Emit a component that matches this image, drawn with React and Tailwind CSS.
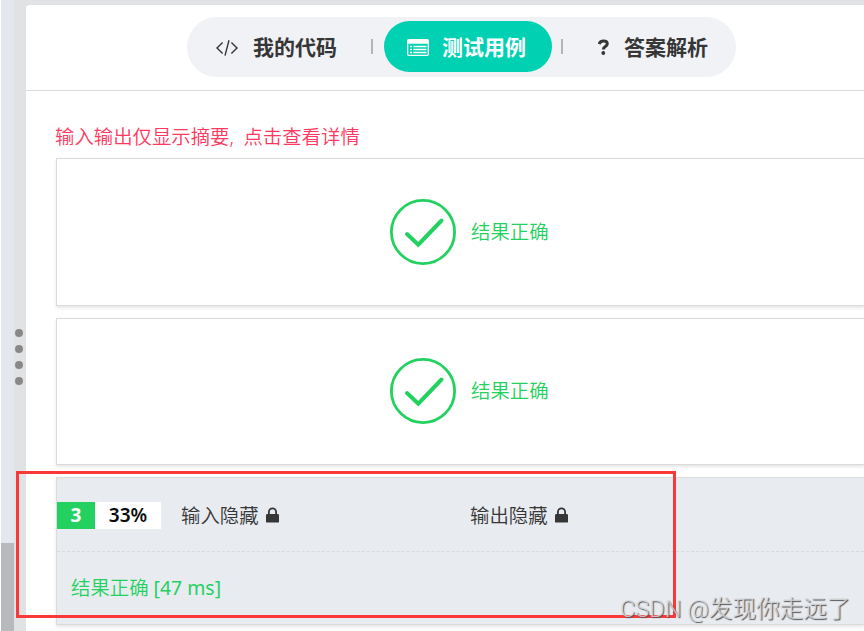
import clsx from 'clsx';

const DOTS = [0, 1, 2, 3];

function CodeIcon() {
  return (
    <svg width="22" height="17" viewBox="0 0 22 17" fill="none" stroke="#363636" strokeWidth="1.4">
      <path d="M6.6 3.6 1 9l5.6 5.4M15.4 3.6 21 9l-5.6 5.4M13 1.2 9 16.6" />
    </svg>
  );
}

function ListIcon() {
  return (
    <svg width="22" height="17" viewBox="0 0 22 17" fill="none" stroke="#fff">
      <rect x=".65" y=".65" width="20.7" height="15.7" rx="1" strokeWidth="1.3" />
      <path d="M1 2.7h20" strokeWidth="4" />
      <path d="M3 7.5h2M3 10.5h2M3 13.5h2M6.3 7.5H19.5M6.3 10.5H19.5M6.3 13.5H19.5" strokeWidth="1.4" />
    </svg>
  );
}

function QuestionIcon() {
  return (
    <svg width="11" height="16" viewBox="0 0 11 16" fill="none">
      <path d="M1.2 5C1.8 3 3.2 2 5.4 2c2.4 0 3.9 1.1 3.9 2.8 0 2.8-4 2.7-4 5.6" stroke="#363636" strokeWidth="3" />
      <circle cx="5.3" cy="14" r="1.9" fill="#363636" />
    </svg>
  );
}

function LockIcon() {
  return (
    <svg className="mb-[2px]" width="13" height="16" viewBox="0 0 13 16" fill="none">
      <path d="M2.9 8V4.9a3.6 3.6 0 0 1 7.2 0V8" stroke="#363636" strokeWidth="1.8" />
      <rect x="0" y="7" width="13" height="8.6" rx="1.2" fill="#363636" />
    </svg>
  );
}

function CheckCircle() {
  return (
    <svg width="66" height="66" viewBox="0 0 66 66" fill="none" stroke="#23d160">
      <circle cx="33" cy="33" r="31.6" strokeWidth="2.8" />
      <path d="M17 35 28.3 45.6 51.5 21.5" strokeWidth="4" strokeLinecap="round" />
    </svg>
  );
}

function Tab({ icon, label, active, className }) {
  return (
    <div
      className={clsx(
        'flex h-[51px] items-center pt-px text-[21px] font-bold whitespace-nowrap',
        active ? 'rounded-full bg-[#00d1b2] font-black text-white' : 'text-[#363636]',
        className
      )}
    >
      {icon}
      <span>{label}</span>
    </div>
  );
}

function ResultCard({ className }) {
  return (
    <div
      className={clsx(
        'flex shrink-0 items-center gap-[15px] border border-r-0 border-[#dbdbdb] bg-white pl-[333px] shadow-[0_2px_3px_rgba(10,10,10,0.1)]',
        className
      )}
    >
      <CheckCircle />
      <span className="text-[#23d160]">结果正确</span>
    </div>
  );
}

export default function App() {
  return (
    <div className="relative flex h-[631px] w-[864px] overflow-hidden bg-[#e1e2e6] font-['Noto_Sans','Noto_Sans_CJK_SC',sans-serif] text-[19.4px] leading-7">
      <div className="flex w-[14px] shrink-0 flex-col justify-end border-l border-white bg-[#e4e7ed]">
        <div className="h-[88px] bg-[#b8b9bd]" />
      </div>
      <div className="flex w-3 shrink-0 flex-col items-center gap-2 bg-[#e1e2e4] pt-[329px]">
        {DOTS.map((dot) => (
          <div key={dot} className="ml-[-2px] h-2 w-2 shrink-0 rounded-full bg-[#888]" />
        ))}
      </div>

      <div className="mt-[5px] flex min-w-0 flex-1 flex-col overflow-hidden rounded-tl-[4px] bg-white">
        <div className="h-[86px] shrink-0 border-b border-[#dbdbdb] pt-3 pl-[161px]">
          <div className="flex h-[60px] w-[549px] items-center rounded-full bg-[#f1f2f6] pb-px">
            <Tab className="w-[184px] gap-[15px] pl-[29px]" icon={<CodeIcon />} label="我的代码" />
            <div className="mr-[11px] h-[15px] w-[2px] bg-[#b5b5b5]" />
            <Tab active className="w-[168px] gap-[13px] pl-[23px]" icon={<ListIcon />} label="测试用例" />
            <div className="ml-[9px] h-[15px] w-[2px] bg-[#b5b5b5]" />
            <Tab className="gap-[15px] pl-[35px]" icon={<QuestionIcon />} label="答案解析" />
          </div>
        </div>

        <div className="flex flex-col pt-[32px] pl-[30px] font-[350]">
          <p className="mb-[7px] -ml-px text-[#ff3860] [word-spacing:4.5px]">输入输出仅显示摘要, 点击查看详情</p>
          <ResultCard className="mb-3 h-[148px]" />
          <ResultCard className="mb-3 h-[147px] pb-px" />
          <div className="h-[148px] shrink-0 border border-r-0 border-[#dbdbdb] bg-[#e8ebf0] shadow-[0_2px_3px_rgba(10,10,10,0.1)]">
            <div className="flex h-[74px] items-center border-b border-dashed border-[#d8dadd] pt-[2px] text-[#363636]">
              <div className="flex h-[27px] items-center text-[19px] font-semibold">
                <span className="flex h-full w-[38px] items-center justify-center bg-[#23d160] pb-[2px] font-bold text-white">3</span>
                <span className="flex h-full w-[66px] items-center justify-center bg-white pb-[2px] text-[#0a0a0a]">33%</span>
              </div>
              <div className="flex w-[309px] items-center gap-[7px] pl-5">
                <span>输入隐藏</span>
                <LockIcon />
              </div>
              <div className="flex items-center gap-[7px]">
                <span>输出隐藏</span>
                <LockIcon />
              </div>
            </div>
            <div className="flex h-[72px] items-center pl-[14px] text-[#23d160]">
              <span>结果正确 <span className="font-normal">[47 ms]</span></span>
            </div>
          </div>
        </div>
      </div>

      <div className="pointer-events-none absolute top-[471px] left-[16px] h-[147px] w-[660px] border-3 border-[#fb3838]" />
      <div className="pointer-events-none absolute top-[593px] left-[620px] font-['Roboto','Noto_Sans_CJK_SC',sans-serif] text-[23.6px] leading-8 font-[350] whitespace-nowrap text-[#dcdee1]/80 [text-shadow:1px_1px_1px_#555]">
        CSDN @发现你走远了
      </div>
    </div>
  );
}
